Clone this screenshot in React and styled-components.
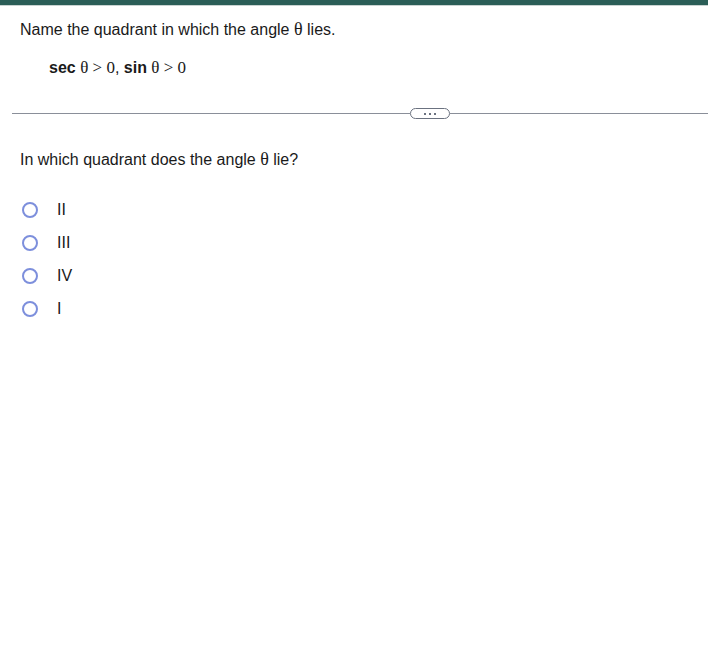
import React from "react";
import styled, { createGlobalStyle } from "styled-components";

const Global = createGlobalStyle`
  html, body { margin: 0; padding: 0; background: #fff; }
  body { font-family: "Liberation Sans", Arial, sans-serif; color: #1a1a1a; }
`;

const Page = styled.div`
  width: 708px;
  min-height: 653px;
  background: #fff;
`;

const TopBar = styled.div`
  height: 5px;
  background: #2b5e57;
  border-bottom: 1px solid #c9d3d1;
`;

const Section = styled.div`
  padding: ${(p) => p.$pad};
`;

const Prompt = styled.div`
  font-size: 16px;
  line-height: 20px;
  color: #1a1a1a;
`;

const Given = styled.div`
  margin-top: 18px;
  padding-left: 29px;
  font-size: 16px;
  line-height: 20px;
`;

const B = styled.b`
  font-weight: bold;
`;

const M = styled.span`
  font-family: "Liberation Serif", "Times New Roman", serif;
  font-size: ${(p) => (p.$big ? "18px" : "17px")};
`;

const Divider = styled.div`
  display: flex;
  align-items: center;
  margin-left: 12px;
  margin-top: 30px;
`;

const Line = styled.div`
  flex: ${(p) => (p.$grow ? 1 : "0 0 " + p.$w + "px")};
  height: 1px;
  background: #8a8f99;
`;

const Pill = styled.div`
  width: 38px;
  height: 9px;
  border: 1px solid #6b7280;
  border-radius: 6px;
  display: flex;
  align-items: center;
  justify-content: center;
  gap: 3px;
`;

const Dot = styled.span`
  width: 2px;
  height: 2px;
  background: #6b7280;
`;

const Options = styled.div`
  display: flex;
  flex-direction: column;
  gap: 13px;
  margin-top: 30px;
  padding-left: 22px;
`;

const Option = styled.label`
  display: flex;
  align-items: center;
  gap: 19px;
  height: 20px;
  font-size: 16px;
`;

const Radio = styled.span`
  width: 12px;
  height: 12px;
  border: 2px solid #7d8fdc;
  border-radius: 50%;
  box-sizing: content-box;
`;

export default function App() {
  return (
    <Page>
      <Global />
      <TopBar />
      <Section $pad="13px 0 0 20px">
        <Prompt>
          Name the quadrant in which the angle <M $big>θ</M> lies.
        </Prompt>
        <Given>
          <B>sec</B> <M>θ &gt; 0</M>, <B>sin</B> <M>θ &gt; 0</M>
        </Given>
      </Section>
      <Divider>
        <Line $w={398} />
        <Pill>
          <Dot />
          <Dot />
          <Dot />
        </Pill>
        <Line $grow />
      </Divider>
      <Section $pad="30px 0 0 20px">
        <Prompt>
          In which quadrant does the angle <M $big>θ</M> lie?
        </Prompt>
      </Section>
      <Options>
        {["II", "III", "IV", "I"].map((o) => (
          <Option key={o}>
            <Radio />
            {o}
          </Option>
        ))}
      </Options>
    </Page>
  );
}
